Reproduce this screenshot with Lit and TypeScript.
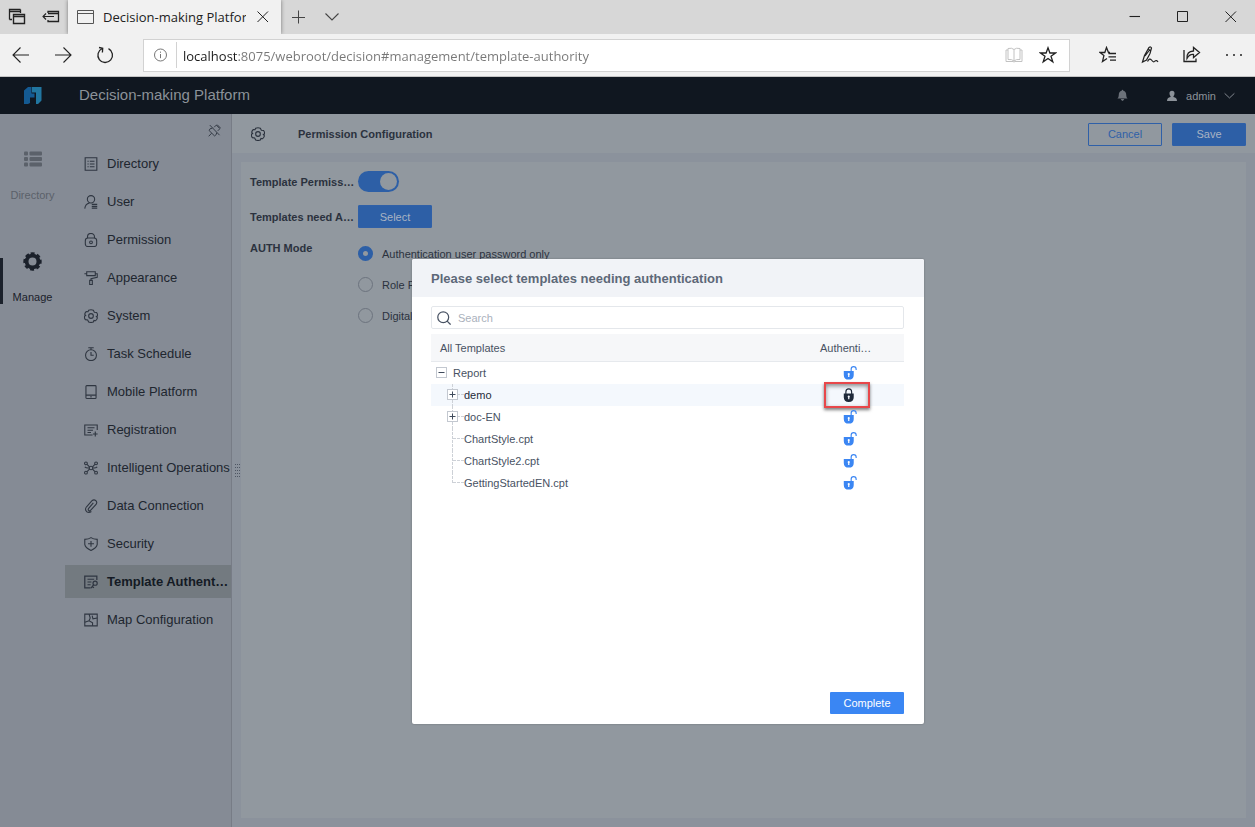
import { LitElement, html, css, svg, nothing } from "lit";
import type { TemplateResult } from "lit";
import { customElement, property, state } from "lit/decorators.js";
import { classMap } from "lit/directives/class-map.js";

/* ---------- icons ---------- */

const shapes: Record<string, TemplateResult> = {
  tabs: svg`<path d="M1.5 11.5V1.5H12.5M1.5 3.5H12.5M1.5 11.5H4M12.5 1.5V5" stroke-width="1.3"/><path d="M5.5 6.5H16.5V15.5H5.5ZM5.5 8.5H16.5" stroke-width="1.4"/>`,
  setAside: svg`<path d="M6 5V3.5H16.5V13.5H6V12" stroke-width="1.3"/><path d="M6 5.5H16.5" stroke-width="1.5"/><path d="M12 8.5H1M4 5.5L1 8.5L4 11.5" stroke-width="1.1"/>`,
  page: svg`<path d="M.5 2.5H16.5V15.5H.5ZM.5 5.5H16.5" stroke="#555" stroke-width="1"/>`,
  close: svg`<path d="M3.5 3.5L14 14M14 3.5L3.5 14" stroke-width="1"/>`,
  plus: svg`<path d="M9.5 2.500V15.500M3 9.500H16" stroke="#444" stroke-width="1"/>`,
  chevron: svg`<path d="M2.500 5.500L9 12L15.500 5.500" stroke="#444" stroke-width="1.1"/>`,
  caret: svg`<path d="M1 5.500L9 13L17 5.500" stroke-width="1.5"/>`,
  minimize: svg`<path d="M3.500 8.500H14" stroke-width="1.1"/>`,
  maximize: svg`<path d="M3.500 3.500H13.500V13.500H3.500Z" stroke-width="1"/>`,
  back: svg`<path d="M17 9H1.500M8.500 1.500L1 9L8.500 16.500" stroke-width="1.1"/>`,
  forward: svg`<path d="M1 9H16.500M9.500 1.500L17 9L9.500 16.500" stroke-width="1.1"/>`,
  refresh: svg`<path d="M12.500 2.700A7.300 7.300 0 1 1 6.300 2.500" stroke-width="1.3"/><path d="M3 1.500L6.700 2.300L6.400 6.500" stroke-width="1.3"/>`,
  info: svg`<circle cx="9.500" cy="9" r="6"/><path d="M9.500 8V12.200M9.500 5.600V6.800"/>`,
  book: svg`<path d="M3 4H1V15.500H8L9 16L10 15.500H17V4H15"/><path d="M3 2.500Q7 1.500 9 3.500Q11 1.500 15 2.500V13.500Q11 13 9 15Q7 13 3 13.500ZM9 3.500V15"/>`,
  star: svg`<path d="M9 1.800L10.900 7H16.600L12 10.300L13.800 15.800L9 12.500L4.200 15.800L6 10.300L1.400 7H7.100Z" stroke-width="1.300"/>`,
  favorites: svg`<path d="M9.500 7.500H17M9.500 10.800H17M11 14.200H17" stroke-width="1.300"/><path d="M11 6.500L9.500 6.500L7.500 1.500L5.800 6.500H1L4.900 9.600L3.500 15.500L8 12.500" stroke-width="1.300"/>`,
  pen: svg`<path d="M1.500 16L3.500 9.500L8 1.500Q9.800.2 10.500 2L9 7.500L5.500 14L1.500 16ZM7.500 3.500L9.800 4.500M4 10L9 3.500" stroke-width="1.200"/><path d="M6.500 15.500Q8.500 11.500 10.500 14Q12.500 17 14 15Q15.500 13.800 17 16" stroke-width="1.200"/>`,
  share: svg`<path d="M1 4V15.500H13V12.500" stroke-width="1.300"/><path d="M4 12.500Q3.500 5.500 10.500 5V1.500L16.500 6.500L10.500 11.500V8.500Q6.500 8 4 12.500Z" stroke-width="1.300"/>`,
  more: svg`<g fill="currentColor" stroke="none"><circle cx="2" cy="9" r="1"/><circle cx="9" cy="9" r="1"/><circle cx="16" cy="9" r="1"/></g>`,
  bell: svg`<path fill="currentColor" stroke="none" d="M9 1Q10 1 10.200 2.300Q14.200 3.300 14.200 8.500Q14.200 11.500 16 13H2Q3.800 11.500 3.800 8.500Q3.800 3.300 7.800 2.300Q8 1 9 1ZM6.500 14H11.500Q10.500 16.500 9 16.500Q7.500 16.500 6.500 14Z"/>`,
  person: svg`<path fill="currentColor" stroke="none" d="M9 1Q12.800 1 12.800 5Q12.800 8 11.200 9.500V10.500Q16.500 11.500 16.500 16.500H1.500Q1.500 11.500 6.800 10.500V9.500Q5.200 8 5.200 5Q5.200 1 9 1Z"/>`,
  list: svg`<g fill="currentColor" stroke="none"><rect x="0" y="1.500" width="4" height="4" rx="1"/><rect x="5.500" y="1.500" width="12.500" height="4" rx="1"/><rect x="0" y="7" width="4" height="4" rx="1"/><rect x="5.500" y="7" width="12.500" height="4" rx="1"/><rect x="0" y="12.500" width="4" height="4" rx="1"/><rect x="5.500" y="12.500" width="12.500" height="4" rx="1"/></g>`,
  gear: svg`<circle cx="9" cy="9" r="5.600" stroke-width="3.600"/><path stroke-width="3.200" stroke-dasharray="3.400 2.170" d="M9 1.900A7.100 7.100 0 1 1 8.990 1.900" transform="rotate(-13 9 9)"/>`,
  unpin: svg`<g stroke-width="1.300"><path d="M2.500 1.500L16 15.500"/><path d="M6 5.800L3 6.500L1.500 9L9 16.500L11.500 14.500L12 12"/><path d="M5 12.800L1 17"/><path d="M8.500 4.500L11.500 1.500L16.500 6.500L13.500 9.500"/><path d="M12.500 .8L17.200 5.500"/></g>`,
  directory: svg`<path d="M1.500 1H16.500V17H1.500Z" stroke-width="1.400"/><path d="M4.500 5.500H6M4.500 9H6M4.500 12.500H6M7.500 5.500H13.500M7.500 9H13.500M7.500 12.500H13.500" stroke-width="1.400"/>`,
  user: svg`<circle cx="9" cy="5.500" r="4.700" stroke-width="1.400"/><path d="M1 17.500Q1.500 11.500 7 10.200" stroke-width="1.400"/><path d="M10 12.200H17M10 14.600H17M10 17H17" stroke-width="1.600"/>`,
  permission: svg`<rect x="1.700" y="6.500" width="14.600" height="11" rx="3.500" stroke-width="1.400"/><path d="M4.500 6.500V5A4.500 4.500 0 0 1 13.500 5V6.500" stroke-width="1.400"/><circle cx="9" cy="12" r="1.800" stroke-width="1.400"/>`,
  appearance: svg`<path d="M3.500 1H14.500V6H3.500ZM3.500 3.500H.500M14.500 3.500H17V8L9 10V12M7.300 12H10.700V17.500H7.300Z" stroke-width="1.400"/>`,
  nut: svg`<path d="M6 1.500Q9 .3 12 1.500L13.300 4.200L16.200 4.500Q18 7 17.300 9L15.800 9.500L17.300 11.500Q16.500 14 15 15L12.800 14.700L12 16.700Q9 18 6 16.700L4.700 14.200L1.800 13.700Q0 11.500.7 9L2.200 8.500L.9 6.500Q1.500 4.500 3 3.200L5.200 3.500Z" stroke-width="1.400"/><circle cx="9" cy="9" r="3" stroke-width="1.400"/>`,
  schedule: svg`<circle cx="9" cy="10.500" r="7" stroke-width="1.400"/><path d="M5.500 1H12.500M9 1V3.500M9 6.500V10.700H12.500" stroke-width="1.400"/>`,
  mobile: svg`<rect x="2.500" y=".8" width="13" height="16.500" rx="1" stroke-width="1.400"/><path d="M2.500 13H15.500M9 14V16.200" stroke-width="1.400"/>`,
  registration: svg`<path d="M11 15.500H1V2.500H17V9" stroke-width="1.400"/><path d="M4.500 6.200H13.500M4.500 9.300H11.500M4.500 12.300H9M14.500 11V17.500M11.500 14.200H17.500" stroke-width="1.400"/>`,
  operations: svg`<circle cx="9" cy="9" r="2.300" stroke-width="1.400"/><circle cx="2.500" cy="3" r="1.800" stroke-width="1.400"/><circle cx="15.500" cy="3" r="1.800" stroke-width="1.400"/><circle cx="2.500" cy="15" r="1.800" stroke-width="1.400"/><circle cx="15.500" cy="15" r="1.800" stroke-width="1.400"/><path d="M4 4.300L7 7.500M14 4.300L11 7.500M4 13.700L7 10.500M14 13.700L11 10.500M1 7.500Q3 9.500 6.500 9M17 7.500Q15 9.500 11.500 9" stroke-width="1.400"/>`,
  clip: svg`<path d="M12 5L6 12Q4.700 14 6.200 15Q7.700 15.700 9 14L15.500 7Q17.500 4 15 1.900Q12.500 .2 10 2.500L3.300 10Q.5 13.500 3.500 16.300Q6.500 18.200 9.500 16" stroke-width="1.400"/>`,
  security: svg`<path d="M9 .8Q12 2.800 17 3V9.500Q16.500 14 9 17.300Q1.500 14 1 9.500V3Q6 2.800 9 .8Z" stroke-width="1.400"/><path d="M9 5V12.500M5.200 8.700H12.800" stroke-width="1.400"/>`,
  template: svg`<path d="M8.500 16.500H1V1.500H16.500V6.500" stroke-width="1.600"/><path d="M4.500 5.500H13M4.500 9H9.500M4.500 12.500H8.500" stroke-width="1.500"/><circle cx="14.300" cy="10.500" r="2.700" stroke-width="1.500"/><path d="M12.500 12.300L9 17M10.800 15L12.800 16.500" stroke-width="1.500"/>`,
  map: svg`<path d="M1 1.500H17V16.500H1Z" stroke-width="1.400"/><path d="M6.500 1.500L8 6.500L6.500 10L11 12.500V16.500M1 12L6.500 10M17 6.500L11.500 7.500L10.500 3.500" stroke-width="1.400"/>`,
  search: svg`<circle cx="8" cy="8" r="7" stroke-width="1.600"/><path d="M13 13L17.500 17.500" stroke-width="1.600"/>`,
  locked: svg`<path d="M3.700 8V5A3.700 3.800 0 0 1 11.100 5V8" stroke-width="1.500"/><path fill="currentColor" stroke="none" fill-rule="evenodd" d="M1 7H13.800V12Q13.800 18 7.400 18Q1 18 1 12ZM7.400 9.500A1.500 1.500 0 0 0 6.600 12.200V14.500H8.200V12.200A1.500 1.500 0 0 0 7.400 9.500Z"/>`,
  unlocked: svg`<path d="M10.500 7V3.800A3.200 3 0 0 1 16.900 3.800V5" stroke-width="1.500"/><path fill="currentColor" stroke="none" fill-rule="evenodd" d="M1 6.500H13.800V11.500Q13.800 17.500 7.400 17.500Q1 17.500 1 11.500ZM7.400 9A1.500 1.500 0 0 0 6.600 11.700V14H8.200V11.700A1.500 1.500 0 0 0 7.400 9Z"/>`,
};

const icon = (name: string, size = 18) => html`<svg
  class="icon"
  width=${size}
  height=${size}
  viewBox="0 0 18 18"
  fill="none"
  stroke="currentColor"
  aria-hidden="true"
>${shapes[name]}</svg>`;

const base = css`
  * {
    box-sizing: border-box;
  }
  button,
  input {
    font: inherit;
    color: inherit;
    margin: 0;
    padding: 0;
    border: 0;
    background: none;
    border-radius: 0;
    outline: none;
  }
  button {
    cursor: pointer;
  }
  .icon {
    display: block;
    flex: none;
  }
`;

/* ---------- browser frame ---------- */

@customElement("browser-bar")
export class BrowserBar extends LitElement {
  static styles = [
    base,
    css`
      :host {
        display: block;
        font-family: "Open Sans", "Noto Sans", sans-serif;
        font-size: 13px;
        color: #222;
      }
      .strip {
        display: flex;
        height: 34px;
        background: #d7d7d7;
      }
      .tool {
        display: grid;
        place-items: center;
        width: 34px;
        height: 34px;
      }
      .tab {
        display: flex;
        align-items: center;
        width: 213px;
        padding: 0 9px;
        background: #f1f1f1;
        box-shadow: 0 0 4px rgba(0, 0, 0, 0.45);
        clip-path: inset(0 -6px);
      }
      .tab-title {
        flex: 1;
        min-width: 0;
        margin: 0 8px;
        overflow: hidden;
        white-space: nowrap;
      }
      .window {
        display: flex;
        margin-left: auto;
      }
      .window .tool {
        width: 48px;
      }
      .bar {
        display: flex;
        align-items: center;
        height: 43px;
        background: #f1f1f1;
        border-bottom: 1px solid #c4c4c4;
      }
      .bar .tool {
        width: 42px;
      }
      .address {
        display: flex;
        align-items: center;
        flex: 1;
        height: 33px;
        margin: 0 17px;
        padding-right: 4px;
        border: 1px solid #d2d2d2;
        background: #fff;
      }
      .address .tool {
        width: 34px;
        height: 31px;
      }
      .site {
        display: grid;
        place-items: center;
        width: 33px;
        height: 26px;
        border-right: 1px solid #d2d2d2;
        color: #767676;
      }
      .url {
        flex: 1;
        min-width: 0;
        height: 31px;
        margin-left: 6px;
        padding-top: 1px;
        color: transparent;
        background: linear-gradient(90deg, #1a1a1a 54px, #777 54px);
        -webkit-background-clip: text;
        background-clip: text;
      }
      .address .faint {
        color: #c2c2c2;
      }
    `,
  ];

  render() {
    return html`
      <div class="strip">
        <button class="tool" aria-label="Tabs set aside">${icon("tabs")}</button>
        <button class="tool" aria-label="Set tabs aside">${icon("setAside")}</button>
        <div class="tab">
          ${icon("page")}
          <span class="tab-title">Decision-making Platform</span>
          <button aria-label="Close tab">${icon("close")}</button>
        </div>
        <button class="tool" aria-label="New tab">${icon("plus")}</button>
        <button class="tool" aria-label="Tab previews">${icon("chevron")}</button>
        <div class="window">
          <button class="tool" aria-label="Minimize">${icon("minimize")}</button>
          <button class="tool" aria-label="Maximize">${icon("maximize")}</button>
          <button class="tool" aria-label="Close">${icon("close")}</button>
        </div>
      </div>
      <div class="bar">
        <button class="tool" aria-label="Back">${icon("back")}</button>
        <button class="tool" aria-label="Forward">${icon("forward")}</button>
        <button class="tool" aria-label="Refresh">${icon("refresh")}</button>
        <div class="address">
          <span class="site">${icon("info")}</span>
          <input
            class="url"
            aria-label="Address"
            value="localhost:8075/webroot/decision#management/template-authority"
          />
          <button class="tool faint" aria-label="Reading view">${icon("book")}</button>
          <button class="tool" aria-label="Add to favorites">${icon("star")}</button>
        </div>
        <button class="tool" aria-label="Favorites">${icon("favorites")}</button>
        <button class="tool" aria-label="Notes">${icon("pen")}</button>
        <button class="tool" aria-label="Share">${icon("share")}</button>
        <button class="tool" aria-label="More">${icon("more")}</button>
      </div>
    `;
  }
}

/* ---------- management menu ---------- */

const menu: [string, string][] = [
  ["directory", "Directory"],
  ["user", "User"],
  ["permission", "Permission"],
  ["appearance", "Appearance"],
  ["nut", "System"],
  ["schedule", "Task Schedule"],
  ["mobile", "Mobile Platform"],
  ["registration", "Registration"],
  ["operations", "Intelligent Operations"],
  ["clip", "Data Connection"],
  ["security", "Security"],
  ["template", "Template Authent…"],
  ["map", "Map Configuration"],
];

@customElement("side-menu")
export class SideMenu extends LitElement {
  static styles = [
    base,
    css`
      :host {
        display: flex;
        background: #858b95;
        color: #20262f;
        border-right: 1px solid #777c86;
      }
      .rail {
        width: 65px;
      }
      .section {
        position: relative;
        display: flex;
        flex-direction: column;
        align-items: center;
        gap: 16px;
        width: 100%;
        padding: 33px 0 13px;
        font-size: 11px;
        line-height: 16px;
        color: #5b616a;
      }
      .section .box {
        display: grid;
        place-items: center;
        height: 24px;
      }
      .section.active {
        color: #1b212b;
      }
      .section.active::before {
        content: "";
        position: absolute;
        left: 0;
        top: 42px;
        width: 3px;
        height: 46px;
        background: #1b212b;
      }
      .menu {
        width: 166px;
      }
      .pin {
        display: flex;
        align-items: center;
        justify-content: flex-end;
        height: 33px;
        padding-right: 10px;
      }
      .pin .icon,
      .item .icon {
        color: #2f3641;
      }
      .items {
        display: flex;
        flex-direction: column;
        gap: 5px;
      }
      .item {
        display: flex;
        align-items: center;
        gap: 9px;
        height: 33px;
        padding-left: 19px;
        font-size: 13px;
        color: inherit;
        text-decoration: none;
        white-space: nowrap;
      }
      .item.active {
        background: #737a80;
        color: #141a24;
        font-weight: bold;
      }
    `,
  ];

  @property() selected = "template";

  render() {
    return html`
      <nav class="rail">
        <button class="section">
          <span class="box">${icon("list")}</span>Directory
        </button>
        <button class="section active">
          <span class="box">${icon("gear", 19)}</span>Manage
        </button>
      </nav>
      <nav class="menu">
        <div class="pin"><button aria-label="Unpin menu">${icon("unpin", 13)}</button></div>
        <div class="items">
          ${menu.map(
            ([name, label]) => html`<a
              class=${classMap({ item: true, active: name === this.selected })}
              href="#management/${name}"
              >${icon(name, 14)}<span>${label}</span></a
            >`
          )}
        </div>
      </nav>
    `;
  }
}

/* ---------- template picker ---------- */

interface Node {
  name: string;
  level: number;
  expand?: "open" | "closed";
  locked?: boolean;
  last?: boolean;
}

@customElement("template-dialog")
export class TemplateDialog extends LitElement {
  static styles = [
    base,
    css`
      :host {
        display: flex;
        flex-direction: column;
        background: #fff;
        border-radius: 2px;
        overflow: hidden;
        color: #485263;
        font-size: 11px;
        box-shadow: 0 0 2px rgba(0, 0, 0, 0.3);
      }
      .title {
        margin: 0;
        padding: 1px 19px 0;
        background: #f1f3f7;
        color: #5d6878;
        font-size: 13px;
        line-height: 38px;
        height: 38px;
      }
      .body {
        flex: 1;
        padding: 9px 20px 0 19px;
      }
      .search {
        display: flex;
        align-items: center;
        gap: 7px;
        height: 23px;
        padding-left: 5px;
        border: 1px solid #e4e7eb;
        border-radius: 2px;
      }
      .search input {
        flex: 1;
        height: 21px;
      }
      .search input::placeholder {
        color: #aab1bc;
        opacity: 1;
      }
      .templates {
        width: 100%;
        margin-top: 5px;
        border-collapse: separate;
        border-spacing: 0;
        table-layout: fixed;
      }
      th {
        height: 28px;
        padding: 0;
        background: #f6f7f9;
        border-bottom: 1px solid #e6e9ed;
        font-weight: normal;
        text-align: left;
      }
      th.name {
        padding-left: 9px;
      }
      .auth {
        width: 108px;
      }
      .auth-label {
        display: block;
        width: 60px;
        margin: 0 auto;
      }
      td {
        height: 22px;
        padding: 0;
      }
      .current td {
        background: #f4f8fd;
      }
      .current {
        color: #1f2a3a;
      }
      .node {
        display: flex;
        align-items: center;
        height: 22px;
        line-height: 22px;
      }
      .level-0 {
        padding-left: 5px;
        gap: 6px;
      }
      .level-1 {
        padding-left: 16px;
      }
      .twig {
        display: block;
      }
      .lock-cell {
        position: relative;
        height: 22px;
        display: grid;
        place-items: center;
      }
      .lock {
        color: #3b86f3;
      }
      .current .lock {
        color: #1f2a3a;
      }
      .marker {
        position: absolute;
        inset: -2px 34px -2px 28px;
        border: 2px solid #e8474a;
        box-shadow: 0 2px 3px rgba(0, 0, 0, 0.5), inset 0 2px 4px rgba(0, 0, 0, 0.45);
        pointer-events: none;
      }
      .actions {
        display: flex;
        justify-content: flex-end;
        padding: 0 20px 10px 19px;
      }
      .complete {
        width: 74px;
        height: 22px;
        border-radius: 1px;
        background: #3a86f3;
        color: #fff;
      }
    `,
  ];

  @state() nodes: Node[] = [
    { name: "Report", level: 0, expand: "open" },
    { name: "demo", level: 1, expand: "closed", locked: true },
    { name: "doc-EN", level: 1, expand: "closed" },
    { name: "ChartStyle.cpt", level: 1 },
    { name: "ChartStyle2.cpt", level: 1 },
    { name: "GettingStartedEN.cpt", level: 1, last: true },
  ];

  private toggle(node: Node) {
    this.nodes = this.nodes.map((n) => (n === node ? { ...n, locked: !n.locked } : n));
  }

  private twig(n: Node) {
    const width = n.level ? 17 : 11;
    return html`<svg class="twig" width=${width} height="22" viewBox="0 0 ${width} 22" fill="none" aria-hidden="true">
      ${n.level
        ? svg`<path d="M5.500 0V${n.last ? 11 : 22}M6 10.500H17" stroke="#cdd1d7" stroke-dasharray="3 1"/>`
        : nothing}
      ${n.expand
        ? svg`<rect x=".5" y="5.500" width="10" height="10" fill="#fff" stroke="#c3c8d0"/><path d=${
            n.expand === "open" ? "M2.500 10.500H8.500" : "M2.500 10.500H8.500M5.500 7.500V13.500"
          } stroke="#3f4a5b"/>`
        : nothing}
    </svg>`;
  }

  render() {
    return html`
      <h2 class="title">Please select templates needing authentication</h2>
      <div class="body">
        <label class="search">
          ${icon("search", 14)}
          <input type="text" placeholder="Search" aria-label="Search" />
        </label>
        <table class="templates">
          <thead>
            <tr>
              <th class="name">All Templates</th>
              <th class="auth"><span class="auth-label">Authenti…</span></th>
            </tr>
          </thead>
          <tbody>
            ${this.nodes.map(
              (n) => html`<tr class=${n.locked ? "current" : ""}>
                <td><div class="node level-${n.level}">${this.twig(n)}<span>${n.name}</span></div></td>
                <td>
                  <div class="lock-cell">
                    <button class="lock" aria-label="Authentication for ${n.name}" @click=${() => this.toggle(n)}>
                      ${icon(n.locked ? "locked" : "unlocked", 14)}
                    </button>
                    ${n.locked ? html`<span class="marker"></span>` : nothing}
                  </div>
                </td>
              </tr>`
            )}
          </tbody>
        </table>
      </div>
      <div class="actions"><button class="complete">Complete</button></div>
    `;
  }
}

/* ---------- page ---------- */

@customElement("app-root")
export class AppRoot extends LitElement {
  static styles = [
    base,
    css`
      :host {
        position: relative;
        display: flex;
        flex-direction: column;
        min-height: 100vh;
        font-family: "Liberation Sans", Arial, sans-serif;
        font-size: 11px;
        color: #2b323e;
        background: #8b929c;
      }
      .top {
        display: flex;
        align-items: center;
        height: 37px;
        padding: 0 20px 0 23px;
        background: #101720;
        color: #8c9299;
      }
      .brand {
        flex: 1;
        margin: 0 0 0 36px;
        font-size: 15px;
        line-height: 18px;
        padding-bottom: 2px;
        font-weight: normal;
      }
      .alerts {
        color: #6c727a;
        margin-right: 37px;
      }
      .account {
        display: flex;
        align-items: center;
        gap: 8px;
      }
      .work {
        display: flex;
        flex: 1;
      }
      .main {
        position: relative;
        display: flex;
        flex-direction: column;
        flex: 1;
        min-width: 0;
      }
      .grip {
        position: absolute;
        left: 3px;
        top: 350px;
      }
      .heading {
        display: flex;
        align-items: center;
        height: 39px;
        padding: 1px 9px 0 19px;
        background: #91989f;
      }
      .heading h1 {
        flex: 1;
        margin: 0 0 0 33px;
        font-size: 11px;
      }
      .button {
        width: 74px;
        height: 23px;
        border: 1px solid #2f60a8;
        border-radius: 1px;
        color: #2f60a8;
      }
      .primary {
        background: #2d5fa6;
        color: #a9b3c3;
      }
      .heading .primary {
        margin-left: 10px;
      }
      .card {
        flex: 1;
        margin: 9px;
        padding: 2px 9px;
        background: #91989f;
      }
      .field {
        display: grid;
        grid-template-columns: 108px 1fr;
        align-items: center;
        min-height: 35px;
      }
      .name {
        font-weight: bold;
        white-space: nowrap;
      }
      .modes {
        align-items: start;
      }
      .modes .name {
        line-height: 28px;
      }
      .options {
        padding-top: 4px;
      }
      .option {
        display: flex;
        align-items: center;
        gap: 9px;
        height: 31px;
      }
      .radio {
        appearance: none;
        width: 15px;
        height: 15px;
        border: 1px solid #6c737e;
        border-radius: 50%;
      }
      .radio:checked {
        border: 5px solid #2d5fa6;
        background: #91989f;
      }
      .switch {
        appearance: none;
        width: 41px;
        height: 21px;
        padding: 2px;
        border-radius: 11px;
        background: #2d5fa6;
      }
      .switch::before {
        content: "";
        display: block;
        width: 17px;
        height: 17px;
        margin-left: auto;
        border-radius: 50%;
        background: #91989f;
      }
      .dialog {
        position: absolute;
        left: 412px;
        top: 259px;
        width: 512px;
        height: 465px;
      }
    `,
  ];

  render() {
    return html`
      <browser-bar></browser-bar>
      <header class="top">
        <svg class="icon" width="20" height="20" viewBox="0 0 20 20" aria-hidden="true">
          <path fill="#145a92" d="M5 1H8.500V7.500H11.500V11.500H7V17L5 18H1V4.500Z" />
          <path fill="#2176a0" d="M9 1H18.500V14.500L15 18H13V6.500H9Z" />
        </svg>
        <h2 class="brand">Decision-making Platform</h2>
        <button class="alerts" aria-label="Messages">${icon("bell", 13)}</button>
        <button class="account">${icon("person", 12)}admin${icon("caret", 11)}</button>
      </header>
      <div class="work">
        <side-menu></side-menu>
        <main class="main">
          <div class="heading">
            ${icon("nut", 14)}
            <h1>Permission Configuration</h1>
            <button class="button">Cancel</button>
            <button class="button primary">Save</button>
          </div>
          <form class="card">
            <div class="field">
              <label class="name" for="switch">Template Permiss…</label>
              <input class="switch" id="switch" type="checkbox" checked />
            </div>
            <div class="field">
              <span class="name">Templates need A…</span>
              <div><button class="button primary" type="button">Select</button></div>
            </div>
            <div class="field modes" role="radiogroup" aria-labelledby="mode">
              <span class="name" id="mode">AUTH Mode</span>
              <div class="options">
                <label class="option"
                  ><input class="radio" type="radio" name="mode" checked />Authentication user password only</label
                >
                <label class="option"><input class="radio" type="radio" name="mode" />Role Permission</label>
                <label class="option"><input class="radio" type="radio" name="mode" />Digital Signature</label>
              </div>
            </div>
          </form>
          <svg class="grip" width="5" height="14" viewBox="0 0 5 14" stroke="#4e5663" aria-hidden="true">
            <path d="M.5 0V14M2.500 0V14M4.500 0V14" stroke-dasharray="1 2" />
          </svg>
        </main>
      </div>
      <template-dialog class="dialog" role="dialog" aria-label="Please select templates needing authentication"></template-dialog>
    `;
  }
}
